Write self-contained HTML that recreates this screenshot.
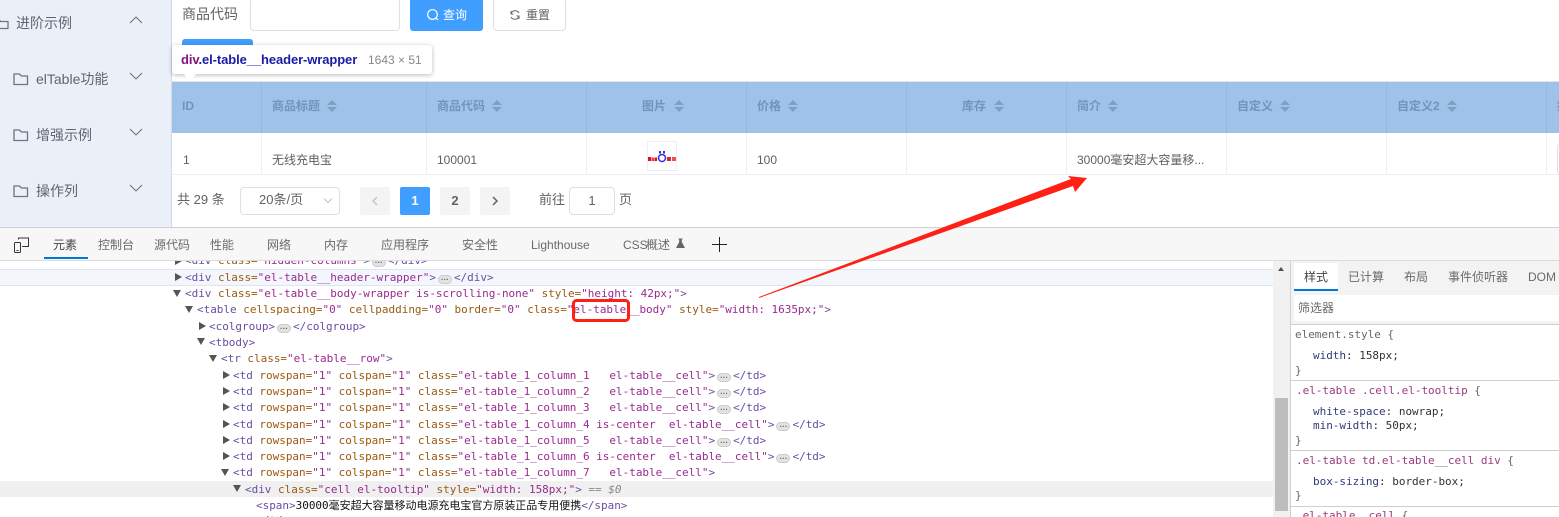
<!DOCTYPE html>
<html><head><meta charset="utf-8">
<style>
html,body{margin:0;padding:0;width:1559px;height:517px;overflow:hidden;background:#fff}
body{position:relative;font-family:"Liberation Sans","Noto Sans CJK SC",sans-serif;color:#606266}
.a{position:absolute;white-space:pre}
.c{position:absolute;white-space:pre;font:11px/16px "DejaVu Sans Mono","Noto Sans CJK SC",monospace;letter-spacing:-0.02px;color:#9a3a7e;margin-top:1px}
.c i{font-style:normal}
.k{color:#6a4fa0}.n{color:#9a5a10}.v{color:#9a2a8e}
.tri{position:absolute;width:0;height:0;border-style:solid}
.r{border-width:4px 0 4px 7px;border-color:transparent transparent transparent #555}
.d{border-width:7px 4px 0 4px;border-color:#555 transparent transparent transparent}
.dots{display:inline-block;width:14px;height:9px;background:#e2e2e2;border-radius:5px;vertical-align:-1px;margin:0 2px;border:0.5px solid #ccc;box-sizing:border-box;text-align:center;font:bold 8px/7px "Liberation Sans",sans-serif;color:#666;letter-spacing:0}
.side{font-size:14px;line-height:20px;color:#5f6670}
.h{font-size:12px;font-weight:bold;line-height:16px;color:#7095bd;top:98px}
.td{font-size:12px;line-height:16px;color:#5d6066;top:152px}
.vl{position:absolute;width:1px;background:#94b9df;top:82px;height:51px}
.vb{position:absolute;width:1px;background:#ebeef5;top:133px;height:41px}
.up{position:absolute;width:0;height:0;border:5px solid transparent;border-top:0;border-bottom:5px solid #7f9fc4}
.dn{position:absolute;width:0;height:0;border:5px solid transparent;border-bottom:0;border-top:5px solid #7f9fc4}
.tab{font-size:12px;line-height:16px;color:#6a6a6a;top:237px}
.tb{z-index:2}
.pg{position:absolute;top:187px;width:30px;height:28px;background:#f4f4f5;border-radius:2px;text-align:center;font-size:13px;font-weight:bold;line-height:28px;color:#606266}
.box{position:absolute;box-sizing:border-box;border:1px solid #dcdfe6;border-radius:4px;background:#fff}
.s{position:absolute;left:1291px;width:268px;height:1px;background:#cfcfcf}
</style></head><body>

<!-- sidebar -->
<div class="a" style="left:0;top:0;width:171px;height:227px;background:#ebf0f8"></div>
<div class="a" style="left:171px;top:0;width:1px;height:227px;background:#d3d8e4"></div>
<svg class="a" style="left:0;top:0" width="172" height="210" fill="none" stroke="#6d7480" stroke-width="1.300" stroke-linejoin="round">
<path d="M-6 29V19.500H-1L0.500 21.500H8V28.500H-6Z"/>
<path d="M14 84.500V74H19.500L21.500 76H27.500V84.500Z"/>
<path d="M14 140.500V130H19.500L21.500 132H27.500V140.500Z"/>
<path d="M14 196.500V186H19.500L21.500 188H27.500V196.500Z"/>
<path d="M130 23L136 17L142 23" stroke-width="1.100"/>
<path d="M130 73L136 79L142 73" stroke-width="1.100"/>
<path d="M130 129L136 135L142 129" stroke-width="1.100"/>
<path d="M130 185L136 191L142 185" stroke-width="1.100"/>
</svg>
<div class="a side" style="left:16px;top:13px">进阶示例</div>
<div class="a side" style="left:36px;top:69px">elTable功能</div>
<div class="a side" style="left:36px;top:125px">增强示例</div>
<div class="a side" style="left:36px;top:181px">操作列</div>

<!-- search form -->
<div class="a" style="left:182px;top:4px;font-size:14px;line-height:20px;color:#606266">商品代码</div>
<div class="box" style="left:250px;top:-2px;width:150px;height:33px"></div>
<div class="a" style="left:410px;top:-2px;width:73px;height:33px;background:#409eff;border-radius:3px"></div>
<svg class="a" style="left:426px;top:8px" width="14" height="14" fill="none" stroke="#fff" stroke-width="1.200"><circle cx="6.500" cy="6.500" r="4.800"/><path d="M10 10L12 12"/></svg>
<div class="a" style="left:443px;top:7px;font-size:12px;line-height:16px;color:#fff">查询</div>
<div class="box" style="left:493px;top:-2px;width:73px;height:33px"></div>
<svg class="a" style="left:509px;top:9px" width="12" height="12" fill="none" stroke="#606266" stroke-width="1"><path d="M10 4A4.500 4.500 0 0 0 2 4.500M2 8A4.500 4.500 0 0 0 10 7.500"/><path d="M2 2V5H4.500M10 10V7H7.500"/></svg>
<div class="a" style="left:526px;top:7px;font-size:12px;line-height:16px;color:#606266">重置</div>
<div class="a" style="left:182px;top:39px;width:71px;height:10px;background:#409eff;border-radius:3px 3px 0 0"></div>

<!-- table -->
<div class="a" style="left:172px;top:81px;width:1387px;height:1px;background:#dfe6f0"></div>
<div class="a" style="left:172px;top:82px;width:1387px;height:51px;background:#9fc3e8"></div>
<div class="a" style="left:172px;top:174px;width:1387px;height:1px;background:#ebeef5"></div>
<div class="vl" style="left:261px"></div><div class="vl" style="left:426px"></div><div class="vl" style="left:586px"></div><div class="vl" style="left:746px"></div><div class="vl" style="left:906px"></div><div class="vl" style="left:1066px"></div><div class="vl" style="left:1226px"></div><div class="vl" style="left:1386px"></div><div class="vl" style="left:1546px"></div>
<div class="vb" style="left:261px"></div><div class="vb" style="left:426px"></div><div class="vb" style="left:586px"></div><div class="vb" style="left:746px"></div><div class="vb" style="left:906px"></div><div class="vb" style="left:1066px"></div><div class="vb" style="left:1226px"></div><div class="vb" style="left:1386px"></div><div class="vb" style="left:1546px"></div>

<div class="a h" style="left:182px">ID</div>
<div class="a h" style="left:272px">商品标题</div><div class="up" style="left:327px;top:100px"></div><div class="dn" style="left:327px;top:107px"></div>
<div class="a h" style="left:437px">商品代码</div><div class="up" style="left:492px;top:100px"></div><div class="dn" style="left:492px;top:107px"></div>
<div class="a h" style="left:642px">图片</div><div class="up" style="left:674px;top:100px"></div><div class="dn" style="left:674px;top:107px"></div>
<div class="a h" style="left:757px">价格</div><div class="up" style="left:788px;top:100px"></div><div class="dn" style="left:788px;top:107px"></div>
<div class="a h" style="left:962px">库存</div><div class="up" style="left:994px;top:100px"></div><div class="dn" style="left:994px;top:107px"></div>
<div class="a h" style="left:1077px">简介</div><div class="up" style="left:1108px;top:100px"></div><div class="dn" style="left:1108px;top:107px"></div>
<div class="a h" style="left:1237px">自定义</div><div class="up" style="left:1280px;top:100px"></div><div class="dn" style="left:1280px;top:107px"></div>
<div class="a h" style="left:1397px">自定义2</div><div class="up" style="left:1447px;top:100px"></div><div class="dn" style="left:1447px;top:107px"></div>
<div class="a h" style="left:1557px">操</div>

<div class="a td" style="left:183px">1</div>
<div class="a td" style="left:272px">无线充电宝</div>
<div class="a td" style="left:437px">100001</div>
<div class="a" style="left:647px;top:141px;width:28px;height:28px;border:1px solid #ebeef5"></div>
<svg class="a" style="left:648px;top:150px" width="28" height="13">
<rect x="0" y="7" width="3" height="4" fill="#e0101c"/><rect x="3.500" y="7.500" width="2.500" height="3.500" fill="#e8404a"/><rect x="6.500" y="7.500" width="2.500" height="3.500" fill="#e0101c"/>
<circle cx="14" cy="8" r="3.500" fill="none" stroke="#2a30e8" stroke-width="1.500"/><rect x="11" y="1" width="2" height="2.500" fill="#2a30e8"/><rect x="15" y="1" width="2" height="2.500" fill="#2a30e8"/>
<rect x="19" y="7" width="4" height="4" fill="#e0202c"/><rect x="24" y="7" width="4" height="4" fill="#e8505a"/>
</svg>
<div class="a td" style="left:757px">100</div>
<div class="a td" style="left:1077px">30000毫安超大容量移...</div>
<div class="a" style="left:1557px;top:144px;width:4px;height:30px;border:1px solid #dcdfe6;box-sizing:border-box;border-radius:3px 0 0 3px"></div>

<!-- pagination -->
<div class="a" style="left:177px;top:192px;font-size:13px;line-height:16px;color:#606266">共 29 条</div>
<div class="box" style="left:240px;top:187px;width:100px;height:28px"></div>
<div class="a" style="left:259px;top:192px;font-size:13px;line-height:16px;color:#606266">20条/页</div>
<svg class="a" style="left:322px;top:197px" width="12" height="8" fill="none" stroke="#c0c4cc"><path d="M2 1.500L6 5.500L10 1.500"/></svg>
<div class="pg" style="left:360px"></div>
<svg class="a" style="left:370px;top:195px" width="10" height="12" fill="none" stroke="#c0c4cc" stroke-width="1.500"><path d="M7 2L3 6L7 10"/></svg>
<div class="pg" style="left:400px;background:#409eff;color:#fff">1</div>
<div class="pg" style="left:440px">2</div>
<div class="pg" style="left:480px"></div>
<svg class="a" style="left:490px;top:195px" width="10" height="12" fill="none" stroke="#606266" stroke-width="1.500"><path d="M3 2L7 6L3 10"/></svg>
<div class="a" style="left:539px;top:192px;font-size:13px;line-height:16px;color:#606266">前往</div>
<div class="box" style="left:569px;top:187px;width:46px;height:28px;text-align:center;font-size:13px;line-height:26px">1</div>
<div class="a" style="left:619px;top:192px;font-size:13px;line-height:16px;color:#606266">页</div>

<!-- tooltip -->
<div class="a" style="left:172px;top:45px;width:260px;height:29px;background:#fff;border-radius:3px;box-shadow:0 1px 5px rgba(0,0,0,.28)"></div>
<div class="a" style="left:184px;top:74px;width:0;height:0;border:6px solid transparent;border-bottom:0;border-top:7px solid #fff"></div>
<div class="a" style="left:181px;top:52px;font-size:13px;letter-spacing:-0.1px;font-weight:bold;line-height:16px;color:#1a1aa6"><span style="color:#881280">div</span>.el-table__header-wrapper</div>
<div class="a" style="left:368px;top:52px;font-size:12px;line-height:16px;color:#888">1643 × 51</div>

<!-- devtools toolbar -->
<div class="a tb" style="left:0;top:227px;width:1559px;height:1px;background:#cfcfd6"></div>
<div class="a tb" style="left:0;top:228px;width:1559px;height:32px;background:#f7f7f7"></div>
<div class="a tb" style="left:0;top:260px;width:1559px;height:1px;background:#dcdcdc"></div>
<svg class="a tb" style="left:13px;top:237px" width="17" height="17" fill="none" stroke="#333" stroke-width="1"><path d="M5.500 2.500V1H15.500V9.500H9"/><rect x="1.500" y="5.500" width="6" height="10" rx="1"/><path d="M3.500 13.500H5.500"/></svg>
<div class="a tab tb" style="left:53px;color:#444">元素</div>
<div class="a tb" style="left:44px;top:257px;width:44px;height:2px;background:#0078d4"></div>
<div class="a tab tb" style="left:98px">控制台</div>
<div class="a tab tb" style="left:154px">源代码</div>
<div class="a tab tb" style="left:210px">性能</div>
<div class="a tab tb" style="left:267px">网络</div>
<div class="a tab tb" style="left:324px">内存</div>
<div class="a tab tb" style="left:381px">应用程序</div>
<div class="a tab tb" style="left:462px">安全性</div>
<div class="a tab tb" style="left:531px">Lighthouse</div>
<div class="a tab tb" style="left:623px">CSS</div>
<div class="a tab tb" style="left:646px">概述</div>
<svg class="a tb" style="left:675px;top:238px" width="11" height="11" fill="#666"><path d="M3.500 0.500H7.500V1.500H6.800V4L10 10H1L4.200 4V1.500H3.500Z"/></svg>
<svg class="a tb" style="left:712px;top:237px" width="16" height="16" stroke="#222" stroke-width="1"><path d="M7.500 0V15M0 7.500H15"/></svg>

<!-- elements panel -->
<div class="a" style="left:0;top:269px;width:1273px;height:15px;background:#f3f7fd;border-top:1px solid #dfe5ee;border-bottom:1px solid #dfe5ee"></div>
<div class="a" style="left:0;top:481px;width:1273px;height:16px;background:#f0f0f0"></div>

<div class="tri r" style="left:175px;top:257px"></div>
<div class="c" style="left:185px;top:252px"><i class="k">&lt;div</i> <i class="n">class=</i><i class="v">"hidden-columns"</i><i class="k">&gt;</i><span class="dots">···</span><i class="k">&lt;/div&gt;</i></div>
<div class="tri r" style="left:175px;top:273px"></div>
<div class="c" style="left:185px;top:269px"><i class="k">&lt;div</i> <i class="n">class=</i><i class="v">"el-table__header-wrapper"</i><i class="k">&gt;</i><span class="dots">···</span><i class="k">&lt;/div&gt;</i></div>
<div class="tri d" style="left:173px;top:290px"></div>
<div class="c" style="left:185px;top:285px"><i class="k">&lt;div</i> <i class="n">class=</i><i class="v">"el-table__body-wrapper is-scrolling-none"</i> <i class="n">style=</i><i class="v">"height: 42px;"</i><i class="k">&gt;</i></div>
<div class="tri d" style="left:185px;top:306px"></div>
<div class="c" style="left:197px;top:301px"><i class="k">&lt;table</i> <i class="n">cellspacing=</i><i class="v">"0"</i> <i class="n">cellpadding=</i><i class="v">"0"</i> <i class="n">border=</i><i class="v">"0"</i> <i class="n">class=</i><i class="v">"el-table__body"</i> <i class="n">style=</i><i class="v">"width: 1635px;"</i><i class="k">&gt;</i></div>
<div class="tri r" style="left:199px;top:322px"></div>
<div class="c" style="left:209px;top:318px"><i class="k">&lt;colgroup&gt;</i><span class="dots">···</span><i class="k">&lt;/colgroup&gt;</i></div>
<div class="tri d" style="left:197px;top:338px"></div>
<div class="c" style="left:209px;top:334px"><i class="k">&lt;tbody&gt;</i></div>
<div class="tri d" style="left:209px;top:355px"></div>
<div class="c" style="left:221px;top:350px"><i class="k">&lt;tr</i> <i class="n">class=</i><i class="v">"el-table__row"</i><i class="k">&gt;</i></div>

<div class="tri r" style="left:223px;top:371px"></div>
<div class="c" style="left:233px;top:367px"><i class="k">&lt;td</i> <i class="n">rowspan=</i><i class="v">"1"</i> <i class="n">colspan=</i><i class="v">"1"</i> <i class="n">class=</i><i class="v">"el-table_1_column_1   el-table__cell"</i><i class="k">&gt;</i><span class="dots">···</span><i class="k">&lt;/td&gt;</i></div>
<div class="tri r" style="left:223px;top:387px"></div>
<div class="c" style="left:233px;top:383px"><i class="k">&lt;td</i> <i class="n">rowspan=</i><i class="v">"1"</i> <i class="n">colspan=</i><i class="v">"1"</i> <i class="n">class=</i><i class="v">"el-table_1_column_2   el-table__cell"</i><i class="k">&gt;</i><span class="dots">···</span><i class="k">&lt;/td&gt;</i></div>
<div class="tri r" style="left:223px;top:403px"></div>
<div class="c" style="left:233px;top:399px"><i class="k">&lt;td</i> <i class="n">rowspan=</i><i class="v">"1"</i> <i class="n">colspan=</i><i class="v">"1"</i> <i class="n">class=</i><i class="v">"el-table_1_column_3   el-table__cell"</i><i class="k">&gt;</i><span class="dots">···</span><i class="k">&lt;/td&gt;</i></div>
<div class="tri r" style="left:223px;top:420px"></div>
<div class="c" style="left:233px;top:416px"><i class="k">&lt;td</i> <i class="n">rowspan=</i><i class="v">"1"</i> <i class="n">colspan=</i><i class="v">"1"</i> <i class="n">class=</i><i class="v">"el-table_1_column_4 is-center  el-table__cell"</i><i class="k">&gt;</i><span class="dots">···</span><i class="k">&lt;/td&gt;</i></div>
<div class="tri r" style="left:223px;top:436px"></div>
<div class="c" style="left:233px;top:432px"><i class="k">&lt;td</i> <i class="n">rowspan=</i><i class="v">"1"</i> <i class="n">colspan=</i><i class="v">"1"</i> <i class="n">class=</i><i class="v">"el-table_1_column_5   el-table__cell"</i><i class="k">&gt;</i><span class="dots">···</span><i class="k">&lt;/td&gt;</i></div>
<div class="tri r" style="left:223px;top:452px"></div>
<div class="c" style="left:233px;top:448px"><i class="k">&lt;td</i> <i class="n">rowspan=</i><i class="v">"1"</i> <i class="n">colspan=</i><i class="v">"1"</i> <i class="n">class=</i><i class="v">"el-table_1_column_6 is-center  el-table__cell"</i><i class="k">&gt;</i><span class="dots">···</span><i class="k">&lt;/td&gt;</i></div>
<div class="tri d" style="left:221px;top:469px"></div>
<div class="c" style="left:233px;top:464px"><i class="k">&lt;td</i> <i class="n">rowspan=</i><i class="v">"1"</i> <i class="n">colspan=</i><i class="v">"1"</i> <i class="n">class=</i><i class="v">"el-table_1_column_7   el-table__cell"</i><i class="k">&gt;</i></div>
<div class="tri d" style="left:233px;top:485px"></div>
<div class="c" style="left:245px;top:481px"><i class="k">&lt;div</i> <i class="n">class=</i><i class="v">"cell el-tooltip"</i> <i class="n">style=</i><i class="v">"width: 158px;"</i><i class="k">&gt;</i> <i style="color:#888;font-style:italic">== $0</i></div>
<div class="c" style="left:256px;top:497px"><i class="k">&lt;span&gt;</i><i style="color:#111">30000毫安超大容量移动电源充电宝官方原装正品专用便携</i><i class="k">&lt;/span&gt;</i></div>
<div class="c" style="left:256px;top:512px"><i class="k">&lt;/td&gt;</i></div>

<!-- scrollbar -->
<div class="a" style="left:1273px;top:261px;width:17px;height:256px;background:#f1f1f1"></div>
<div class="a" style="left:1278px;top:267px;width:0;height:0;border:3.500px solid transparent;border-top:0;border-bottom:4px solid #505050"></div>
<div class="a" style="left:1275px;top:398px;width:13px;height:113px;background:#bdbdbd"></div>
<div class="a" style="left:1290px;top:261px;width:1px;height:256px;background:#d0d0d0"></div>

<!-- styles panel -->
<div class="a" style="left:1291px;top:261px;width:268px;height:63px;background:#f3f3f3"></div>
<div class="a" style="left:1294px;top:263px;width:44px;height:26px;background:#fff"></div>
<div class="a" style="left:1294px;top:289px;width:44px;height:2px;background:#0078d4"></div>
<div class="a tab" style="left:1304px;top:269px;color:#444">样式</div>
<div class="a tab" style="left:1348px;top:269px">已计算</div>
<div class="a tab" style="left:1404px;top:269px">布局</div>
<div class="a tab" style="left:1448px;top:269px">事件侦听器</div>
<div class="a tab" style="left:1528px;top:269px">DOM</div>
<div class="a" style="left:1294px;top:295px;width:265px;height:26px;background:#fff;border-radius:3px 0 0 3px"></div>
<div class="a tab" style="left:1298px;top:300px">筛选器</div>
<div class="s" style="top:324px"></div>
<div class="c" style="left:1295px;top:326px;color:#666">element.style {</div>
<div class="c" style="left:1313px;top:347px;color:#333a7a">width<i style="color:#333">: 158px;</i></div>
<div class="c" style="left:1295px;top:362px;color:#666">}</div>
<div class="s" style="top:380px"></div>
<div class="c" style="left:1296px;top:382px"><i style="color:#9a3a7e">.el-table .cell.el-tooltip</i> <i style="color:#666">{</i></div>
<div class="c" style="left:1313px;top:403px;color:#333a7a">white-space<i style="color:#333">: nowrap;</i></div>
<div class="c" style="left:1313px;top:417px;color:#333a7a">min-width<i style="color:#333">: 50px;</i></div>
<div class="c" style="left:1295px;top:432px;color:#666">}</div>
<div class="s" style="top:450px"></div>
<div class="c" style="left:1296px;top:452px"><i style="color:#9a3a7e">.el-table td.el-table__cell div</i> <i style="color:#666">{</i></div>
<div class="c" style="left:1313px;top:473px;color:#333a7a">box-sizing<i style="color:#333">: border-box;</i></div>
<div class="c" style="left:1295px;top:487px;color:#666">}</div>
<div class="s" style="top:506px"></div>
<div class="c" style="left:1296px;top:507px"><i style="color:#9a3a7e">.el-table .cell</i> <i style="color:#666">{</i></div>

<!-- annotations -->
<svg class="a" style="left:0;top:0;z-index:3" width="1559" height="517">
<polygon points="759,297 1071,179 1068,176 1087,178 1075,192 1073,186 759,298" fill="#ff2015"/>
<rect x="573.500" y="300.500" width="55" height="20" rx="3" fill="none" stroke="#ff2015" stroke-width="3"/>
</svg>
</body></html>
